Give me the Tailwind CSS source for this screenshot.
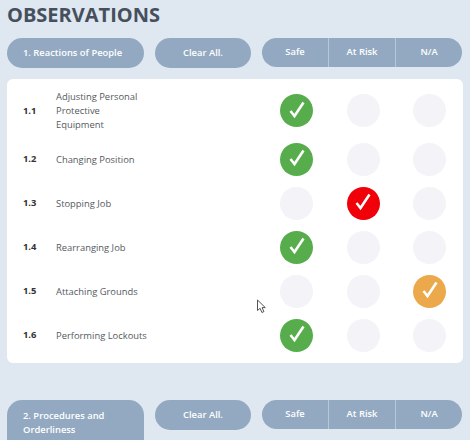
<!DOCTYPE html>
<html lang="en">

<head>
    <meta charset="UTF-8" />
    <title>Observations</title>
    <script src="https://cdn.jsdelivr.net/npm/@tailwindcss/browser@4"></script>
</head>

<body class="bg-[#dfe7f1] font-['Open_Sans',sans-serif] overflow-hidden">
    <div class="relative h-[440px] w-[470px] overflow-hidden px-[7px]">

        <h1 class="h-[38px] pt-[2px] text-[20px] leading-[26px] font-bold text-[#46505c]">OBSERVATIONS</h1>

        <!-- Section 1 -->
        <div class="flex items-start text-[9.4px] font-semibold text-white">
            <div class="flex h-[30px] w-[137px] items-center rounded-[15px] bg-[#93a9c1] px-4">1. Reactions of People</div>
            <button class="ml-[11px] h-[30px] w-[96px] rounded-[15px] bg-[#93a9c1] font-semibold">Clear All.</button>
            <div class="ml-[11px] flex h-[29px] w-[200px] rounded-[15px] bg-[#93a9c1]">
                <div class="flex flex-1 items-center justify-center">Safe</div>
                <div class="flex flex-1 items-center justify-center border-x border-[#b9c8d8]">At Risk</div>
                <div class="flex flex-1 items-center justify-center">N/A</div>
            </div>
        </div>

        <div class="mt-[11px] h-[284px] w-[456px] rounded-md bg-white py-[5px] text-[9.4px] text-[#555a60]">
            <div class="flex h-[53px] items-center">
                <div class="w-[49px] pl-[16px] pt-px font-bold text-[#333]">1.1</div>
                <div class="w-[224px] pt-px leading-[14px]">Adjusting Personal<br>Protective<br>Equipment</div>
                <div class="flex w-[167px] shrink-0 gap-[33.5px]">
                    <div class="flex size-[33px] items-center justify-center rounded-full bg-[#57ad4b]">
                        <svg class="size-[20px]" viewBox="0 0 20 20" fill="none" stroke="#fff" stroke-width="2.6"><path d="M3.5 10l4 5 9-13.5" /></svg>
                    </div>
                    <div class="size-[33px] rounded-full bg-[#f3f3f8]"></div>
                    <div class="size-[33px] rounded-full bg-[#f3f3f8]"></div>
                </div>
            </div>
            <div class="flex h-[44px] items-center">
                <div class="w-[49px] pl-[16px] pt-px font-bold text-[#333]">1.2</div>
                <div class="w-[224px] pt-px leading-[14px]">Changing Position</div>
                <div class="flex w-[167px] shrink-0 gap-[33.5px]">
                    <div class="flex size-[33px] items-center justify-center rounded-full bg-[#57ad4b]">
                        <svg class="size-[20px]" viewBox="0 0 20 20" fill="none" stroke="#fff" stroke-width="2.6"><path d="M3.5 10l4 5 9-13.5" /></svg>
                    </div>
                    <div class="size-[33px] rounded-full bg-[#f3f3f8]"></div>
                    <div class="size-[33px] rounded-full bg-[#f3f3f8]"></div>
                </div>
            </div>
            <div class="flex h-[44px] items-center">
                <div class="w-[49px] pl-[16px] pt-px font-bold text-[#333]">1.3</div>
                <div class="w-[224px] pt-px leading-[14px]">Stopping Job</div>
                <div class="flex w-[167px] shrink-0 gap-[33.5px]">
                    <div class="size-[33px] rounded-full bg-[#f3f3f8]"></div>
                    <div class="flex size-[33px] items-center justify-center rounded-full bg-[#f00008]">
                        <svg class="size-[20px]" viewBox="0 0 20 20" fill="none" stroke="#fff" stroke-width="2.6"><path d="M3.5 10l4 5 9-13.5" /></svg>
                    </div>
                    <div class="size-[33px] rounded-full bg-[#f3f3f8]"></div>
                </div>
            </div>
            <div class="flex h-[44px] items-center">
                <div class="w-[49px] pl-[16px] pt-px font-bold text-[#333]">1.4</div>
                <div class="w-[224px] pt-px leading-[14px]">Rearranging Job</div>
                <div class="flex w-[167px] shrink-0 gap-[33.5px]">
                    <div class="flex size-[33px] items-center justify-center rounded-full bg-[#57ad4b]">
                        <svg class="size-[20px]" viewBox="0 0 20 20" fill="none" stroke="#fff" stroke-width="2.6"><path d="M3.5 10l4 5 9-13.5" /></svg>
                    </div>
                    <div class="size-[33px] rounded-full bg-[#f3f3f8]"></div>
                    <div class="size-[33px] rounded-full bg-[#f3f3f8]"></div>
                </div>
            </div>
            <div class="flex h-[44px] items-center">
                <div class="w-[49px] pl-[16px] pt-px font-bold text-[#333]">1.5</div>
                <div class="w-[224px] pt-px leading-[14px]">Attaching Grounds</div>
                <div class="flex w-[167px] shrink-0 gap-[33.5px]">
                    <div class="size-[33px] rounded-full bg-[#f3f3f8]"></div>
                    <div class="size-[33px] rounded-full bg-[#f3f3f8]"></div>
                    <div class="flex size-[33px] items-center justify-center rounded-full bg-[#eba94c]">
                        <svg class="size-[20px]" viewBox="0 0 20 20" fill="none" stroke="#fff" stroke-width="2.6"><path d="M3.5 10l4 5 9-13.5" /></svg>
                    </div>
                </div>
            </div>
            <div class="flex h-[44px] items-center">
                <div class="w-[49px] pl-[16px] pt-px font-bold text-[#333]">1.6</div>
                <div class="w-[224px] pt-px leading-[14px]">Performing Lockouts</div>
                <div class="flex w-[167px] shrink-0 gap-[33.5px]">
                    <div class="flex size-[33px] items-center justify-center rounded-full bg-[#57ad4b]">
                        <svg class="size-[20px]" viewBox="0 0 20 20" fill="none" stroke="#fff" stroke-width="2.6"><path d="M3.5 10l4 5 9-13.5" /></svg>
                    </div>
                    <div class="size-[33px] rounded-full bg-[#f3f3f8]"></div>
                    <div class="size-[33px] rounded-full bg-[#f3f3f8]"></div>
                </div>
            </div>
        </div>

        <!-- Section 2 -->
        <div class="mt-[37px] flex items-start text-[9.4px] font-semibold text-white">
            <div class="flex h-[60px] w-[137px] items-start rounded-[15px] bg-[#93a9c1] px-4 py-[9px] leading-[14px]">2. Procedures and Orderliness</div>
            <button class="ml-[11px] h-[30px] w-[96px] rounded-[15px] bg-[#93a9c1] font-semibold">Clear All.</button>
            <div class="ml-[11px] flex h-[29px] w-[200px] rounded-[15px] bg-[#93a9c1]">
                <div class="flex flex-1 items-center justify-center">Safe</div>
                <div class="flex flex-1 items-center justify-center border-x border-[#b9c8d8]">At Risk</div>
                <div class="flex flex-1 items-center justify-center">N/A</div>
            </div>
        </div>

        <!-- mouse pointer caught in the capture -->
        <svg class="absolute top-[299px] left-[256px] h-[15px] w-[11px]" viewBox="0 0 11 15" fill="#fff" stroke="#555" stroke-width="1"><path d="M1.5 1v10.5l2.6-2.2 1.8 4.2 2-.9-1.8-4h3.2z" /></svg>
    </div>
</body>

</html>
